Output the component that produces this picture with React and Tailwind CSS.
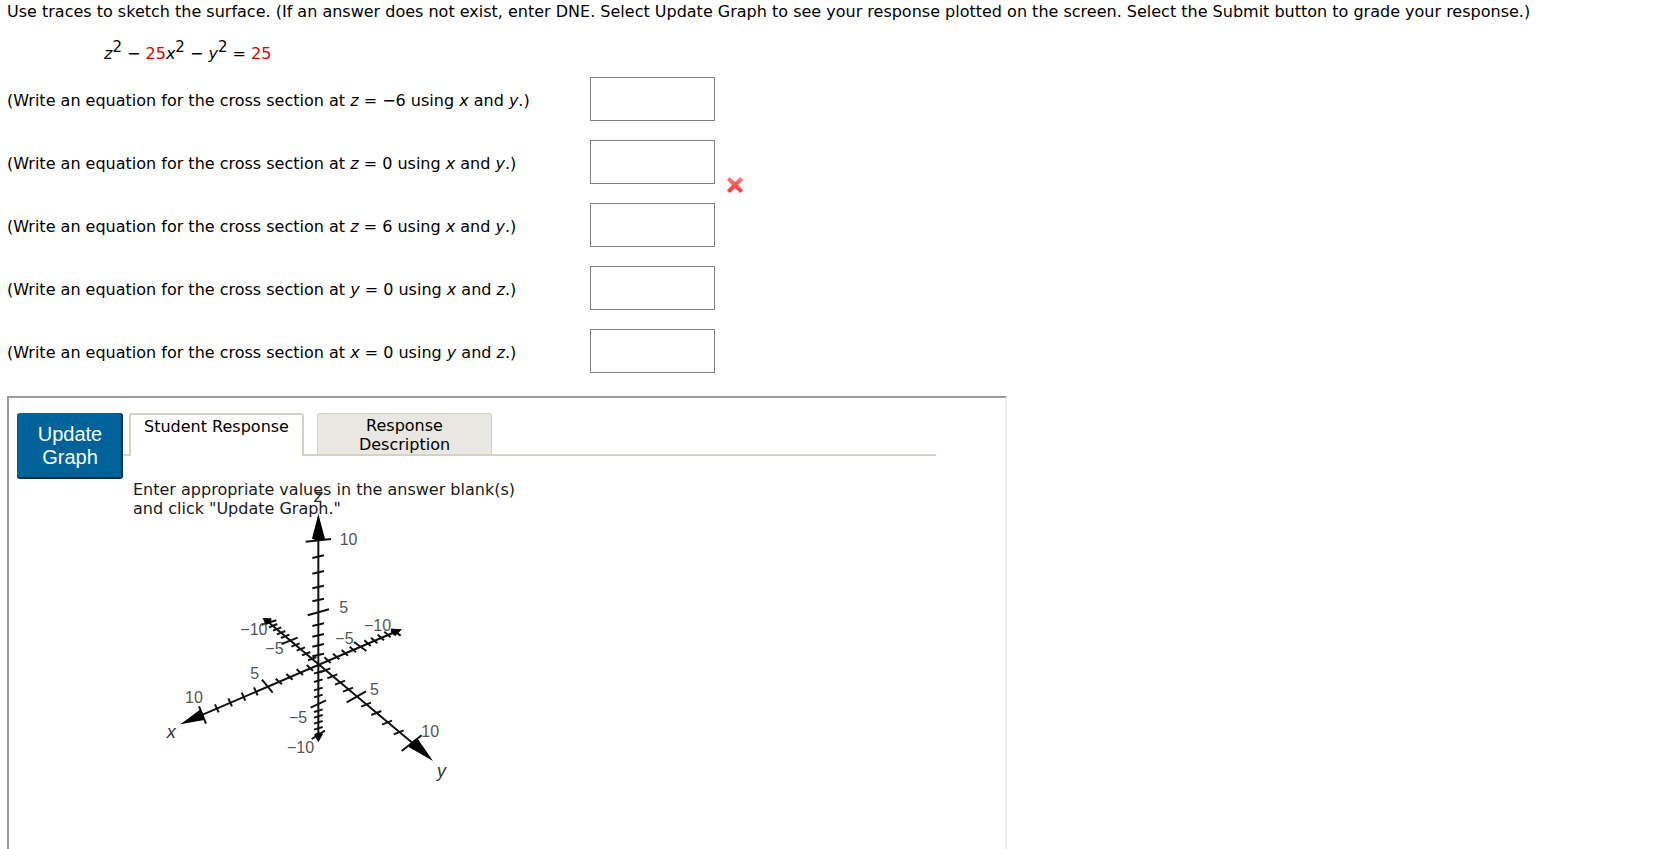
import React, { useState } from "react";

const crossSections = [
  { id: "z-neg6", at: "z", value: "−6", using: ["x", "y"] },
  { id: "z-0", at: "z", value: "0", using: ["x", "y"], wrong: true },
  { id: "z-6", at: "z", value: "6", using: ["x", "y"] },
  { id: "y-0", at: "y", value: "0", using: ["x", "z"] },
  { id: "x-0", at: "x", value: "0", using: ["y", "z"] },
];

// Tick centres along each axis, in the drawing's own units
const zTicks = [230, 277, 321, 360, 434, 466, 496, 525, 577, 602, 627, 648, 692, 709, 727, 745];
const xTicks = [
  [200, 685], [240, 667], [280, 650], [317, 634], [386, 605], [418, 591],
  [449, 577], [479, 564], [532, 541], [558, 530], [584, 519], [608, 509],
  [652, 490], [672, 482], [692, 473], [712, 464],
];
const yTicks = [
  [369, 437], [381, 447], [393, 458], [405, 469], [436, 495], [452, 507],
  [468, 521], [486, 536], [526, 571], [547, 589], [570, 608], [594, 629],
  [648, 674], [679, 699], [711, 728], [746, 757],
];
const longTicks = [
  [467, 185, 543, 177], [473, 406, 537, 388], [482, 683, 528, 661], [485, 777, 525, 752],
  [147, 679, 168, 731], [336, 599, 368, 638], [612, 486, 649, 513], [724, 447, 752, 467],
  [334, 434, 379, 421], [395, 492, 443, 473], [590, 667, 648, 634], [755, 813, 815, 766],
];
const axisNumbers = [
  [569, 195, "10"], [568, 399, "5"], [642, 454, "−10"], [556, 492, "−5"],
  [271, 464, "−10"], [346, 523, "−5"], [301, 596, "5"], [105, 668, "10"],
  [417, 728, "−5"], [411, 820, "−10"], [660, 646, "5"], [814, 771, "10"],
];

const Axes = () => (
  <svg viewBox="0 0 960 960" className="h-[320px] w-[320px]" role="img" aria-label="x, y and z axes from −10 to 10">
    <g fill="none" stroke="#111" strokeWidth="6">
      <path d="M505 170V770M130 716L735 456M350 422L810 808" />
      {zTicks.map((y) => (
        <path key={y} d={`M${y > 560 ? 492 : 487} ${y + 4}L${y > 560 ? 518 : 522} ${y - 4}`} />
      ))}
      {xTicks.map(([x, y]) => (
        <path key={x} d={x < 330 ? `M${x - 5} ${y - 12}L${x + 6} ${y + 12}` : `M${x - 9} ${y - 9}L${x + 10} ${y + 8}`} />
      ))}
      {yTicks.map(([x, y]) => (
        <path key={x} d={x < 500 ? `M${x - 12} ${y + 5}L${x + 13} ${y - 5}` : `M${x - 15} ${y + 6}L${x + 15} ${y - 6}`} />
      ))}
      {longTicks.map(([x1, y1, x2, y2]) => (
        <path key={`${x1}-${y1}`} d={`M${x1} ${y1}L${x2} ${y2}`} />
      ))}
    </g>
    <g fill="#000">
      <path d="M505 102L486 176Q505 186 525 176Z" />
      <path d="M91 733L150 689Q164 701 162 720Z" />
      <path d="M849 843L776 801Q782 782 803 776Z" />
      <path d="M505 787L492 764Q505 750 519 762Z" />
      <path d="M756 448L725 446Q716 456 736 468Z" />
      <path d="M338 414L364 415Q368 428 347 435Z" />
    </g>
    <g fill="#555" className="font-['Liberation_Sans',sans-serif] text-[48px]">
      {axisNumbers.map(([x, y, label]) => (
        <text key={`${x}-${y}`} x={x} y={y}>{label}</text>
      ))}
    </g>
    <g fill="#333" className="font-['Liberation_Sans',sans-serif] text-[54px] italic">
      <text x="492" y="67">z</text>
      <text x="50" y="774">x</text>
      <text x="861" y="892">y</text>
    </g>
  </svg>
);

const WrongMark = () => (
  <svg viewBox="0 0 18 18" className="mt-9 h-[18px] w-[18px]" role="img" aria-label="Incorrect">
    <defs>
      <linearGradient id="wrong" x1="0" y1="0" x2="0" y2="1">
        <stop offset="0" stopColor="#ff7b7b" />
        <stop offset="1" stopColor="#ee3338" />
      </linearGradient>
    </defs>
    <path
      d="M3.5 1.2L9 6L14.5 1.2L17 3.7L12 9L17 14.4L14.4 17L9 12.2L3.6 17L1 14.4L6 9L1 3.7Z"
      fill="url(#wrong)"
      stroke="#f99"
      strokeWidth="0.6"
      strokeLinejoin="round"
    />
  </svg>
);

const Power = ({ base }) => (
  <>
    <i>{base}</i>
    <sup className="relative -top-[7px] align-baseline text-[15px] leading-none">2</sup>
  </>
);

const App = () => {
  const [answers, setAnswers] = useState({});
  const [tab, setTab] = useState("student");

  const tabClass = (name) =>
    tab === name
      ? "border-2 border-b-0 bg-white"
      : "border border-b-2 bg-[#e9e7e1]";

  return (
    <main className="flex min-h-screen flex-col bg-white px-[7px] font-['DejaVu_Sans',Verdana,sans-serif] text-base leading-[19px] text-black">
      <p className="pt-[2px]">
        Use traces to sketch the surface. (If an answer does not exist, enter DNE. Select Update
        Graph to see your response plotted on the screen. Select the Submit button to grade your
        response.)
      </p>

      <p className="mt-[23px] pl-[97px]">
        <Power base="z" /> − <span className="text-[#e00000]">25</span>
        <Power base="x" /> − <Power base="y" /> = <span className="text-[#e00000]">25</span>
      </p>

      <div className="mt-[14px] flex flex-col gap-[19px]">
        {crossSections.map(({ id, at, value, using, wrong }) => (
          <div key={id} className="flex h-11 items-start">
            <label htmlFor={id} className="w-[583px] pt-[14px]">
              (Write an equation for the cross section at <i>{at}</i> = {value} using{" "}
              <i>{using[0]}</i> and <i>{using[1]}</i>.)
            </label>
            <input
              id={id}
              type="text"
              value={answers[id] || ""}
              onChange={(e) => setAnswers({ ...answers, [id]: e.target.value })}
              className="mr-[11px] h-11 w-[125px] border border-[#808080] px-2"
            />
            {wrong && <WrongMark />}
          </div>
        ))}
      </div>

      <section className="mt-[23px] w-full max-w-[1000px] flex-1 border-2 border-b-0 border-t-[#9a9a9a] border-r-[#eeeeee] border-l-[#9a9a9a] pt-[15px] pl-2">
        <div className="flex items-start">
          <button
            type="button"
            className="h-[66px] w-[106px] rounded-[3px] border-r-2 border-b-2 border-[#00304d] bg-[#006298] pt-[2px] pl-[2px] font-['Liberation_Sans',Arial,sans-serif] text-xl leading-[23px] text-white"
          >
            Update Graph
          </button>

          <div className="mr-[69px] flex-1">
            <div role="tablist" className="flex h-[43px] items-stretch">
              <div className="w-[6px] border-b-2 border-[#d5d1c6]" />
              <button
                type="button"
                role="tab"
                aria-selected={tab === "student"}
                onClick={() => setTab("student")}
                className={`flex w-[175px] justify-center rounded-t-[3px] border-[#d5d1c6] pt-[2px] ${tabClass("student")}`}
              >
                Student Response
              </button>
              <div className="w-[13px] border-b-2 border-[#d5d1c6]" />
              <button
                type="button"
                role="tab"
                aria-selected={tab === "description"}
                onClick={() => setTab("description")}
                className={`flex w-[175px] justify-center rounded-t-[3px] border-[#d5d1c6] px-8 pt-[2px] ${tabClass("description")}`}
              >
                Response Description
              </button>
              <div className="flex-1 border-b-2 border-[#d5d1c6]" />
            </div>

            <div className="relative h-[350px] pt-6 pl-[27px]">
              <Axes />
              <p className="absolute top-6 left-[10px] w-[410px] text-[#1a1a1a]">
                Enter appropriate values in the answer blank(s) and click "Update Graph."
              </p>
            </div>
          </div>
        </div>
      </section>
    </main>
  );
};

export default App;
